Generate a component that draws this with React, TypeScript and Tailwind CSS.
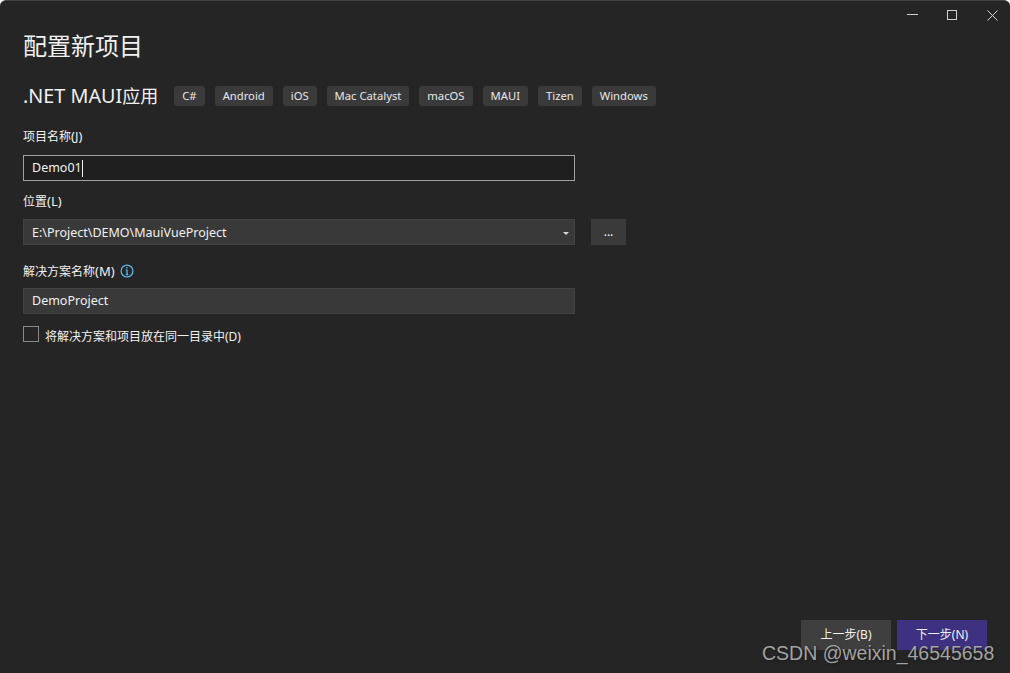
const sans = "font-['Noto_Sans','Noto_Sans_CJK_SC',sans-serif]";

const tags = ["C#", "Android", "iOS", "Mac Catalyst", "macOS", "MAUI", "Tizen", "Windows"];

function Tag({ label }: { label: string }) {
  return (
    <span className="flex h-5 items-center rounded-[3px] bg-[#3a3a3b] px-2 text-[11.250px] leading-none text-[#e8e8e8]">
      {label}
    </span>
  );
}

function WindowControls() {
  return (
    <div className="flex h-[30px] items-start justify-end gap-[29px] pr-[12px] pt-[9px] text-[#d0d0d0]">
      <svg width="11" height="11" viewBox="0 0 11 11" fill="none" stroke="currentColor">
        <path d="M0 4.500h11" />
      </svg>
      <svg width="11" height="11" viewBox="0 0 11 11" fill="none" stroke="currentColor">
        <rect x=".5" y=".5" width="9" height="9" />
      </svg>
      <svg width="11" height="11" viewBox="0 0 11 11" fill="none" stroke="currentColor">
        <path d="M.5.5l10 10M10.500.5l-10 10" />
      </svg>
    </div>
  );
}

export default function App() {
  return (
    <div className={`relative flex h-[673px] w-[1010px] flex-col overflow-hidden rounded-t-[6px] border-t border-[#424243] bg-[#252526] text-[#f1f1f1] ${sans}`}>
      <WindowControls />

      <div className="flex flex-1 flex-col px-[23px]">
        <h1 className="h-[32px] text-[24px] leading-[30px] font-normal">配置新项目</h1>

        <div className="mt-[17px] flex h-[32px] items-center">
          <h2 className="text-[19.800px] leading-[32px] font-normal">
            .NET MAUI<span className="text-[18px]">应用</span>
          </h2>
          <div className="ml-[16px] flex gap-[10px]">
            {tags.map((t) => (
              <Tag key={t} label={t} />
            ))}
          </div>
        </div>

        <label className="mt-[14px] h-[20px] text-[12px] leading-[20px]">
          项目名称<span className="text-[13px]">(J)</span>
        </label>
        <div className="mt-[9px] flex h-[26px] w-[552px] items-center border border-[#a0a0a0] bg-[#1f1f1f] pl-2 text-[12.500px]">
          <span>Demo01</span>
          <span className="h-[17px] w-px bg-[#f1f1f1]" />
        </div>

        <label className="mt-[10px] h-[20px] text-[12px] leading-[20px]">
          位置<span className="text-[13px]">(L)</span>
        </label>
        <div className="mt-[8px] flex gap-4">
          <div className="flex h-[26px] w-[552px] items-center justify-between border border-[#424243] bg-[#39393a] pl-2 pr-[5px] pt-[2px] text-[12.500px]">
            <span>E:\Project\DEMO\MauiVueProject</span>
            <svg width="6" height="3" viewBox="0 0 6 3" fill="#d8d8d8">
              <path d="M0 0h6L3 3z" />
            </svg>
          </div>
          <button className="flex h-[26px] w-[35px] items-center justify-center bg-[#3a3a3b] text-[12px]">...</button>
        </div>

        <div className="mt-[16px] flex h-[20px] items-center gap-[5px]">
          <label className="text-[12px] leading-[20px]">
            解决方案名称<span className="text-[13px]">(M)</span>
          </label>
          <svg width="14" height="14" viewBox="0 0 14 14" fill="none" stroke="#5cb6e6" strokeWidth="1.300">
            <circle cx="7" cy="7" r="5.900" />
            <path d="M7 6v4.500M5.800 10.500h2.400M5.800 6H7" />
            <path d="M7 3.200v1.300" strokeWidth="1.500" />
          </svg>
        </div>
        <div className="mt-[7px] flex h-[26px] w-[552px] items-center border border-[#424243] bg-[#39393a] pl-2 pt-px text-[12.500px]">DemoProject</div>

        <div className="mt-[12px] flex h-[16px] items-start">
          <span className="h-[16px] w-[16px] border border-[#8a8a8a]" />
          <span className="ml-[6px] pt-px text-[12px] leading-[20px]">将解决方案和项目放在同一目录中(D)</span>
        </div>

        <div className="mt-auto mb-[23px] flex justify-end gap-[6px]">
          <button className="h-[30px] w-[90px] bg-[#3f3f40] text-[12px]">上一步(B)</button>
          <button className="h-[30px] w-[90px] bg-[#3e3182] text-[12px]">下一步(N)</button>
        </div>
      </div>

      <span className="absolute left-[762px] top-[640px] font-['Liberation_Sans',sans-serif] text-[19.500px] leading-[24px] text-[#a3a3a3] [text-shadow:1px_1px_2px_#1a1a1a]">
        CSDN @weixin_46545658
      </span>
    </div>
  );
}
